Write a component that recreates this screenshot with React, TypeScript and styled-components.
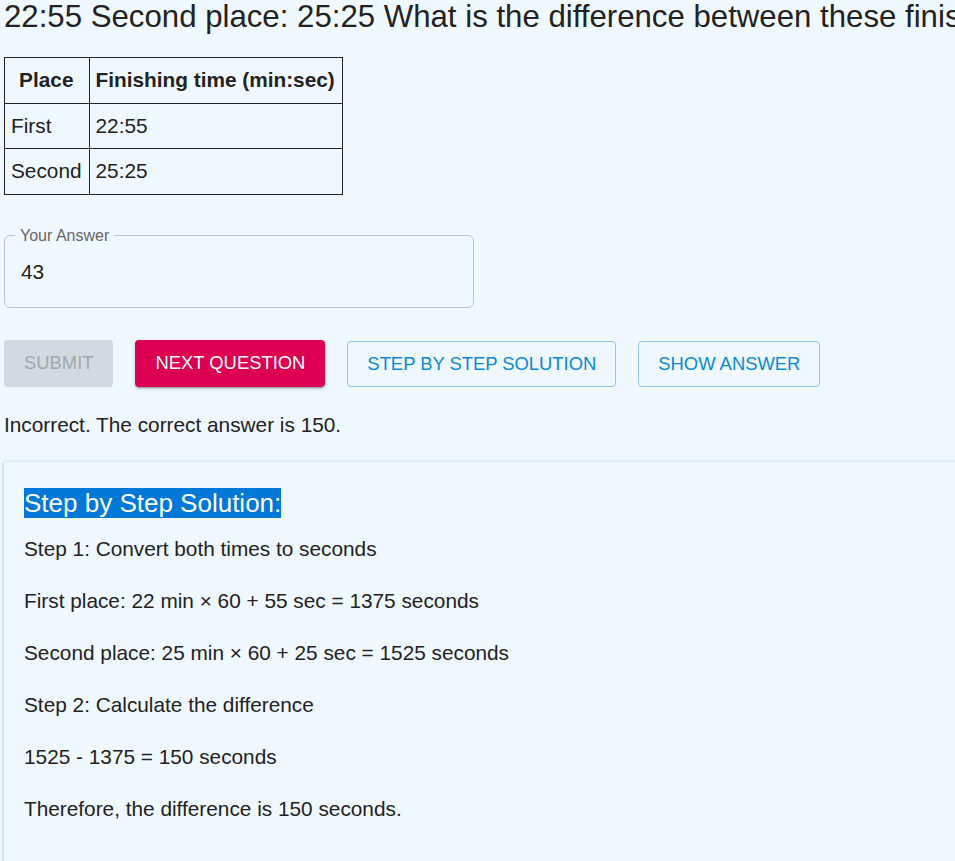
import React from "react";
import styled, { createGlobalStyle } from "styled-components";

const GlobalStyle = createGlobalStyle`
  html, body {
    margin: 0;
    padding: 0;
    background: #f0f8ff;
    overflow: hidden;
  }
  body {
    font-family: "Liberation Sans", Arial, sans-serif;
    color: #222;
  }
`;

const Page = styled.div`
  width: 1300px;
  padding: 0 0 0 3px;
`;

const Question = styled.h2`
  margin: 0 0 23px 1px;
  font-size: 31.2px;
  font-weight: 400;
  line-height: 34px;
  white-space: nowrap;
  color: #222;
`;

const Table = styled.table`
  border-collapse: collapse;
  margin-left: 1px;
  font-size: 20.8px;
  th,
  td {
    border: 1px solid #222;
    padding: 11px 7px 11px 6px;
    line-height: 22.5px;
    text-align: left;
  }
  th {
    font-weight: 700;
    text-align: center;
  }
`;

const Field = styled.fieldset`
  margin: 33px 0 0 1px;
  width: 470px;
  height: 80px;
  box-sizing: border-box;
  border: 1px solid #c0c4c8;
  border-radius: 6px;
  padding: 0 16px;
  legend {
    font-size: 16px;
    color: #666;
    padding: 0 5px;
    margin-left: -6px;
    line-height: 16px;
  }
`;

const Value = styled.div`
  font-size: 20.8px;
  color: #222;
  margin-top: 16px;
`;

const Actions = styled.div`
  display: flex;
  gap: 22px;
  margin: 32px 0 0 1px;
  align-items: flex-end;
`;

const Button = styled.button<{ $variant: "disabled" | "primary" | "outline" }>`
  font-family: "Liberation Sans", Arial, sans-serif;
  font-size: 18.4px;
  text-transform: uppercase;
  height: ${(p) => (p.$variant === "outline" ? "46px" : "47px")};
  padding: 0 ${(p) => (p.$variant === "outline" ? "19px" : "20px")};
  border-radius: 4px;
  cursor: pointer;
  border: ${(p) => (p.$variant === "outline" ? "1px solid #90c6ea" : "none")};
  background: ${(p) =>
    p.$variant === "primary" ? "#dd0050" : p.$variant === "disabled" ? "#d2d9e0" : "transparent"};
  color: ${(p) => (p.$variant === "primary" ? "#fff" : p.$variant === "disabled" ? "#a4a8ac" : "#0a8ad6")};
  box-shadow: ${(p) =>
    p.$variant === "primary"
      ? "0 3px 1px -2px rgba(0,0,0,0.2), 0 2px 2px 0 rgba(0,0,0,0.14), 0 1px 5px 0 rgba(0,0,0,0.12)"
      : "none"};
`;

const Feedback = styled.p`
  margin: 26px 0 0 1px;
  font-size: 20.8px;
  line-height: 24px;
  color: #222;
`;

const Card = styled.section`
  margin-top: 25px;
  padding: 27px 20px 20px;
  background: #f0f8ff;
  border-left: 1px solid #d6dce2;
  box-shadow: 0 -2px 4px rgba(0, 0, 0, 0.06), 0 1px 3px rgba(0, 0, 0, 0.1);
`;

const CardTitle = styled.h3`
  margin: 0 0 18px;
  font-size: 26px;
  font-weight: 400;
  line-height: 28px;
  span {
    background: #0078d7;
    color: #fff;
  }
`;

const Step = styled.p`
  margin: 0 0 24px;
  font-size: 20.8px;
  line-height: 28px;
  color: #222;
`;

const steps = [
  "Step 1: Convert both times to seconds",
  "First place: 22 min × 60 + 55 sec = 1375 seconds",
  "Second place: 25 min × 60 + 25 sec = 1525 seconds",
  "Step 2: Calculate the difference",
  "1525 - 1375 = 150 seconds",
  "Therefore, the difference is 150 seconds.",
];

const App = () => {
  return (
    <Page>
      <GlobalStyle />
      <Question>
        22:55 Second place: 25:25 What is the difference between these finishing times in seconds?
      </Question>
      <Table>
        <thead>
          <tr>
            <th>Place</th>
            <th>Finishing time (min:sec)</th>
          </tr>
        </thead>
        <tbody>
          <tr>
            <td>First</td>
            <td>22:55</td>
          </tr>
          <tr>
            <td>Second</td>
            <td>25:25</td>
          </tr>
        </tbody>
      </Table>
      <Field>
        <legend>Your Answer</legend>
        <Value>43</Value>
      </Field>
      <Actions>
        <Button $variant="disabled" disabled>
          Submit
        </Button>
        <Button $variant="primary">Next Question</Button>
        <Button $variant="outline">Step by Step Solution</Button>
        <Button $variant="outline">Show Answer</Button>
      </Actions>
      <Feedback>Incorrect. The correct answer is 150.</Feedback>
      <Card>
        <CardTitle>
          <span>Step by Step Solution:</span>
        </CardTitle>
        {steps.map((s) => (
          <Step key={s}>{s}</Step>
        ))}
      </Card>
    </Page>
  );
};

export default App;
